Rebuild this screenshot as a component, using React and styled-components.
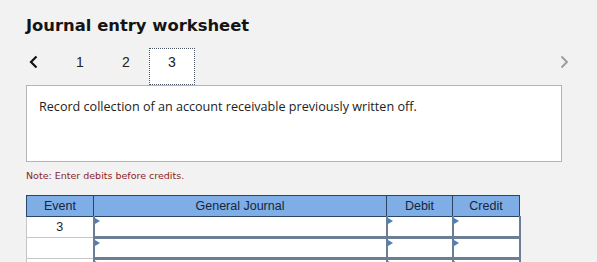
import React from 'react';
import styled, { createGlobalStyle } from 'styled-components';

const GlobalStyle = createGlobalStyle`
  html, body {
    margin: 0;
    padding: 0;
    background: #f2f2f2;
  }
`;

const Page = styled.div`
  padding: 14px 0 0 26px;
  width: 543px;
  font-family: "DejaVu Sans", Verdana, sans-serif;
  color: #1a1a1a;
`;

const Title = styled.h2`
  margin: 0;
  font-size: 16.4px;
  font-weight: bold;
  line-height: 24px;
  color: #141414;
`;

const NavRow = styled.div`
  display: flex;
  align-items: flex-end;
  height: 37px;
  margin-top: 10px;
`;

const Arrow = styled.button`
  box-sizing: border-box;
  width: 31px;
  height: 37px;
  padding: 0 0 10px ${(p) => (p.$right ? '0' : '3px')};
  border: 0;
  background: none;
  display: flex;
  align-items: center;
  justify-content: ${(p) => (p.$right ? 'flex-end' : 'flex-start')};
  margin-left: ${(p) => (p.$right ? 'auto' : '0')};
  color: ${(p) => (p.$right ? '#9a9a9a' : '#111')};
`;

const Tab = styled.div`
  box-sizing: border-box;
  width: 46px;
  height: 37px;
  display: flex;
  align-items: center;
  justify-content: center;
  font-family: "Liberation Sans", Arial, sans-serif;
  font-size: 14px;
  color: #222;
  background: ${(p) => (p.$active ? '#fff' : 'transparent')};
  border: 1px dotted ${(p) => (p.$active ? '#4a5666' : 'transparent')};
  padding-bottom: 9px;
`;

const Prompt = styled.div`
  box-sizing: border-box;
  width: 536px;
  height: 77px;
  background: #fff;
  border: 1px solid #b4b4b4;
  padding: 12px 12px;
  font-family: "Open Sans", Tahoma, sans-serif;
  font-size: 12.6px;
  color: #222;
`;

const Note = styled.div`
  margin-top: 8px;
  font-size: 9.5px;
  color: #8c2323;
`;

const Table = styled.table`
  margin-top: 14px;
  border-collapse: collapse;
  table-layout: fixed;
  width: 493px;
  font-family: "Liberation Sans", Arial, sans-serif;
  font-size: 12.5px;
`;

const Th = styled.th`
  height: 20px;
  padding: 0;
  background: #7eaee5;
  border: 1px solid #2d4565;
  color: #16253f;
  font-weight: normal;
`;

const EventCell = styled.td`
  height: 20px;
  padding: 0;
  background: #fff;
  border: 1px solid #c6c6c6;
  text-align: center;
  color: #222;
`;

const InputCell = styled.td`
  position: relative;
  padding: 0;
  height: 17px;
  background: #fff;
  border-left: 2px solid #6b7e96;
  border-bottom: 3px solid #6b7e96;
  border-right: ${(p) => (p.$last ? '2px solid #6b7e96' : '0')};
  border-top: 1px solid #6b7e96;
`;

const Marker = styled.span`
  position: absolute;
  left: 0;
  top: 1px;
  width: 0;
  height: 0;
  border-top: 3px solid transparent;
  border-bottom: 3px solid transparent;
  border-left: 5px solid #4f7ebd;
`;

const Chevron = ({ dir }) => (
  <svg width="9" height="14" viewBox="0 0 9 14">
    <path
      d={dir === 'left' ? 'M7.5 1.5 L2 7 L7.5 12.5' : 'M1.5 1.5 L7 7 L1.5 12.5'}
      fill="none"
      stroke="currentColor"
      strokeWidth={dir === 'left' ? 2.2 : 1.8}
    />
  </svg>
);

const rows = ['3', '', ''];

const App = () => (
  <>
    <GlobalStyle />
    <Page>
      <Title>Journal entry worksheet</Title>
      <NavRow>
        <Arrow>
          <Chevron dir="left" />
        </Arrow>
        <Tab>1</Tab>
        <Tab>2</Tab>
        <Tab $active>3</Tab>
        <Arrow $right>
          <Chevron dir="right" />
        </Arrow>
      </NavRow>
      <Prompt>Record collection of an account receivable previously written off.</Prompt>
      <Note>Note: Enter debits before credits.</Note>
      <Table>
        <colgroup>
          <col style={{ width: 67 }} />
          <col style={{ width: 293 }} />
          <col style={{ width: 66 }} />
          <col style={{ width: 67 }} />
        </colgroup>
        <thead>
          <tr>
            <Th>Event</Th>
            <Th>General Journal</Th>
            <Th>Debit</Th>
            <Th>Credit</Th>
          </tr>
        </thead>
        <tbody>
          {rows.map((ev, i) => (
            <tr key={i}>
              <EventCell>{ev}</EventCell>
              <InputCell><Marker /></InputCell>
              <InputCell><Marker /></InputCell>
              <InputCell $last><Marker /></InputCell>
            </tr>
          ))}
        </tbody>
      </Table>
    </Page>
  </>
);

export default App;
